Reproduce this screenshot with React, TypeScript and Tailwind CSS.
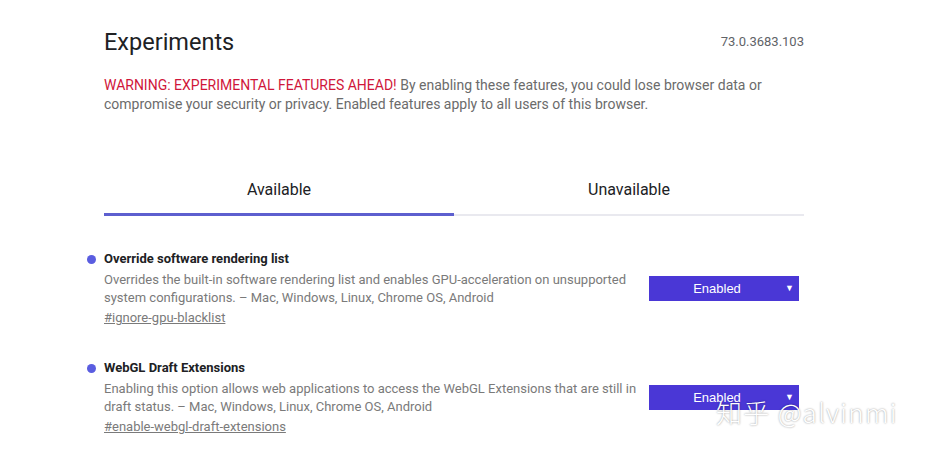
import type { ReactNode } from "react";

type Experiment = {
  title: string;
  description: string;
  hash: string;
};

const experiments: Experiment[] = [
  {
    title: "Override software rendering list",
    description:
      "Overrides the built-in software rendering list and enables GPU-acceleration on unsupported system configurations. – Mac, Windows, Linux, Chrome OS, Android",
    hash: "#ignore-gpu-blacklist"
  },
  {
    title: "WebGL Draft Extensions",
    description:
      "Enabling this option allows web applications to access the WebGL Extensions that are still in draft status. – Mac, Windows, Linux, Chrome OS, Android",
    hash: "#enable-webgl-draft-extensions"
  }
];

function Select({ children }: { children: ReactNode }) {
  return (
    <div className="mr-[5px] ml-auto flex h-[25px] w-[150px] shrink-0 items-center bg-[#4a37d6] font-['Liberation_Sans',Arial,sans-serif] text-[13px] text-white">
      <span className="flex-1 text-center">{children}</span>
      <span className="mr-[4px] w-[10px] text-[9px] leading-none">▼</span>
    </div>
  );
}

function ExperimentRow({ item }: { item: Experiment }) {
  return (
    <div className="flex items-center">
      <div className="relative w-[540px]">
        <span className="absolute top-[4.5px] -left-[17.5px] h-[9px] w-[9px] rounded-full bg-[#5a5de0]" />
        <h2 className="text-[13px] leading-[18px] font-bold text-[#202124]">{item.title}</h2>
        <p className="mt-[3px] text-[13px] leading-[18px] text-[#7a7a7a]">{item.description}</p>
        <a href={item.hash} className="mt-[2px] block text-[13px] leading-[18px] text-[#7a7a7a] underline">
          {item.hash}
        </a>
      </div>
      <Select>Enabled</Select>
    </div>
  );
}

export default function App() {
  return (
    <div className="relative h-[453px] w-[925px] overflow-hidden bg-white font-['Roboto','Noto_Sans',sans-serif]">
      <div className="ml-[104px] w-[700px] pt-[26px]">
        <header className="flex items-center justify-between">
          <h1 className="text-[23.5px] leading-[32px] text-[#202124]">Experiments</h1>
          <span className="text-[13px] text-[#5f6368]">73.0.3683.103</span>
        </header>
        <p className="mt-[18px] text-[14px] leading-[19px] text-[#6b6b6b]">
          <span className="text-[#d0163a]">WARNING: EXPERIMENTAL FEATURES AHEAD!</span> By enabling these features, you
          could lose browser data or compromise your security or privacy. Enabled features apply to all users of this
          browser.
        </p>

        <div className="mt-[64px] flex border-b-2 border-[#e9e9ef]">
          <div className="-mb-[2px] flex-1 border-b-[3px] border-[#5d5fcf] pb-[11px] text-center text-[16px] leading-[24px] text-[#202124]">
            Available
          </div>
          <div className="flex-1 pb-[11px] text-center text-[16px] leading-[24px] text-[#202124]">Unavailable</div>
        </div>

        <div className="mt-[34px] flex flex-col gap-[32px]">
          {experiments.map((item) => (
            <ExperimentRow key={item.hash} item={item} />
          ))}
        </div>
      </div>

      <div className="absolute top-[395px] left-[716px] font-['Noto_Sans_CJK_SC','Noto_Sans',sans-serif] text-[26px] leading-[34px] font-light tracking-[1.3px] text-white [text-shadow:0_0_2px_rgba(0,0,0,0.45)]">
        知乎 @alvinmi
      </div>
    </div>
  );
}
